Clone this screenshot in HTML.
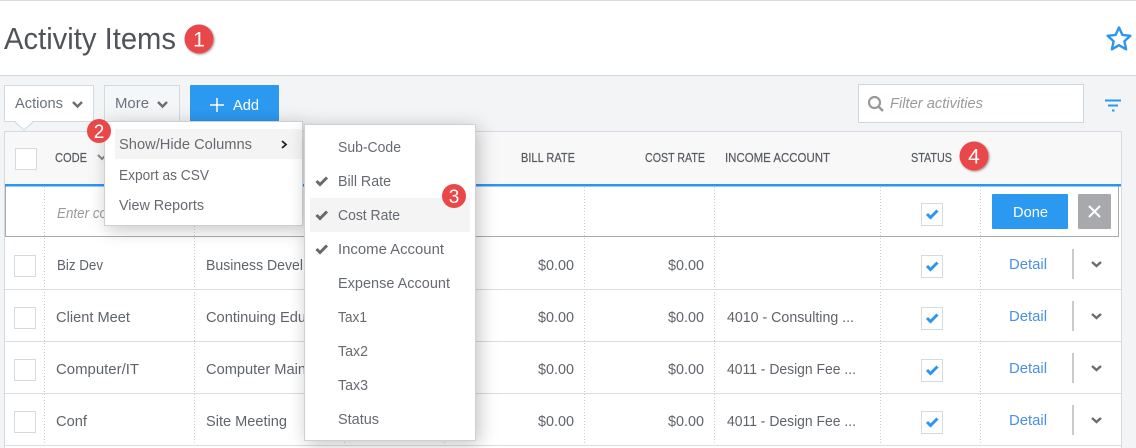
<!DOCTYPE html>
<html><head><meta charset="utf-8"><style>
html,body{margin:0;padding:0;background:#fff;width:1136px;height:448px;overflow:hidden}
svg{display:block}
text{font-family:"Liberation Sans",sans-serif;font-size:14.5px;fill:#5f646b}
.h{font-size:13px;fill:#55595f;stroke:#55595f;stroke-width:.2}
.m{font-size:14.5px;fill:#666a70}
.b{fill:none;stroke:#d5dae1;stroke-width:1}
.d{stroke:#c9ced6;stroke-width:1;stroke-dasharray:1 2}
.r{stroke:#d8dce3;stroke-width:1}
.c{fill:none;stroke:#2c96ee;stroke-width:3}
.g{fill:none;stroke:#6a6d72;stroke-width:2.4}
.n{fill:#fff;font-size:21px;text-anchor:middle}
</style></head><body>
<svg width="1136" height="448" viewBox="0 0 1136 448" xmlns="http://www.w3.org/2000/svg">
<defs>
<clipPath id="c1"><rect x="0" y="0" width="304" height="448"/></clipPath>
<filter id="s" x="-30%" y="-30%" width="160%" height="160%"><feDropShadow dx="3" dy="3" stdDeviation="9" flood-color="#000" flood-opacity=".24"/></filter>
<filter id="bs" x="-30%" y="-30%" width="160%" height="160%"><feDropShadow dx="1" dy="1" stdDeviation="1" flood-color="#000" flood-opacity=".4"/></filter>
</defs>
<rect width="1136" height="448" fill="#f2f4f6"/>
<rect width="1136" height="75" fill="#fff"/>
<rect width="1136" height="1" fill="#d5dde5"/>
<rect y="75" width="1136" height="1" fill="#d3d8dd"/>
<text x="4" y="49" style="font-size:31px;fill:#505358" textLength="172" lengthAdjust="spacingAndGlyphs">Activity Items</text>
<path d="M1119 27.5l3.400 7.400 8 .9-6 5.500 1.700 8-7.100-4.100-7.100 4.100 1.700-8-6-5.500 8-.9z" fill="none" stroke="#2c96ee" stroke-width="2.400" stroke-linejoin="round"/>

<!-- table -->
<rect x="4.500" y="131.500" width="1117" height="320" fill="#fff" stroke="#d5dae1"/>
<rect x="5" y="132" width="1116" height="52" fill="#f8f8f9"/>
<rect x="5" y="184" width="1116" height="2.500" fill="#2c96ee"/>

<!-- toolbar -->
<rect x="4.500" y="85.500" width="89" height="36" fill="#fff" stroke="#cfdae3"/>
<path d="M15 122l9 8 9-8" fill="#fff" stroke="#cfdae3"/>
<rect x="16" y="120" width="16" height="2" fill="#fff"/>
<text x="15" y="108" textLength="48" lengthAdjust="spacingAndGlyphs" style="fill:#6b727c">Actions</text>
<path class="g" d="M73 102l4.500 4.500 4.500-4.500"/>
<rect x="104.500" y="85.500" width="75" height="36" fill="#f4f6f8" stroke="#cfdae3"/>
<text x="115" y="108" textLength="34" lengthAdjust="spacingAndGlyphs" style="fill:#6b727c">More</text>
<path class="g" d="M158 102l4.500 4.500 4.500-4.500"/>
<rect x="190" y="85" width="89" height="37" rx="1" fill="#2c99f0"/>
<path d="M217 98v14M210 105h14" stroke="#fff" stroke-width="1.500" fill="none"/>
<text x="233" y="110" textLength="26" lengthAdjust="spacingAndGlyphs" style="fill:#fff">Add</text>
<rect x="858.500" y="84.500" width="225" height="38" fill="#fff" stroke="#c9d7e2"/>
<circle cx="874.500" cy="102.500" r="5.500" fill="none" stroke="#999" stroke-width="2.200"/>
<path d="M878.500 106.500l4.500 4.500" stroke="#999" stroke-width="2.600" fill="none"/>
<text x="890" y="108" textLength="93" lengthAdjust="spacingAndGlyphs" style="fill:#9a9a9a;font-style:italic">Filter activities</text>
<path d="M1105 100.500h16M1108 105.500h10M1112 110.500h2.500" stroke="#2c96ee" stroke-width="2" fill="none"/>

<!-- header -->
<rect class="b" x="15.500" y="148.500" width="21" height="21" style="fill:#fff"/>
<text class="h" x="55" y="162" textLength="32" lengthAdjust="spacingAndGlyphs">CODE</text>
<path d="M98 155l4 4 4-4" fill="none" stroke="#888" stroke-width="2"/>
<text class="h" x="521" y="162" textLength="54" lengthAdjust="spacingAndGlyphs">BILL RATE</text>
<text class="h" x="645" y="162" textLength="60" lengthAdjust="spacingAndGlyphs">COST RATE</text>
<text class="h" x="725" y="162" textLength="105" lengthAdjust="spacingAndGlyphs">INCOME ACCOUNT</text>
<text class="h" x="911" y="162" textLength="41" lengthAdjust="spacingAndGlyphs">STATUS</text>

<!-- edit row -->
<rect x="5.500" y="186" width="1113" height="50.500" fill="#fff" stroke="#aaa"/>
<rect x="5" y="184" width="1116" height="2.500" fill="#2c96ee"/>
<path class="d" d="M44.500 187v49M194.500 187v49M584.500 187v49M714.500 187v49M880.500 187v49M980.500 187v49"/>
<text x="57" y="218" textLength="50" lengthAdjust="spacingAndGlyphs" style="fill:#9a9a9a;font-style:italic">Enter co</text>
<rect class="b" x="921.500" y="203.500" width="21" height="22" style="fill:#fff"/>
<path class="c" d="M927 214l3.500 3.500 7-7"/>
<rect x="992" y="194" width="76" height="35" rx="1" fill="#2c99f0"/>
<text x="1013" y="217" textLength="35" lengthAdjust="spacingAndGlyphs" style="fill:#fff">Done</text>
<rect x="1078" y="194" width="33" height="35" rx="1" fill="#a7a9ac"/>
<path d="M1089 206l11 11M1100 206l-11 11" stroke="#fff" stroke-width="2" fill="none"/>

<!-- rows -->
<path class="d" d="M44.500 238v210M194.500 238v210M344.500 238v210M444.500 238v210M584.500 238v210M714.500 238v210M880.500 238v210M980.500 238v210"/>
<path class="r" d="M5 289.500h1116M5 341.500h1116M5 393.500h1116M5 445.500h1116"/>
<rect class="b" x="14.500" y="255.500" width="21" height="21" style="fill:#fff"/>
<rect class="b" x="14.500" y="307.500" width="21" height="21" style="fill:#fff"/>
<rect class="b" x="14.500" y="359.500" width="21" height="21" style="fill:#fff"/>
<rect class="b" x="14.500" y="411.500" width="21" height="21" style="fill:#fff"/>
<text x="57" y="270" textLength="46" lengthAdjust="spacingAndGlyphs">Biz Dev</text>
<text x="56" y="322" textLength="74" lengthAdjust="spacingAndGlyphs">Client Meet</text>
<text x="56" y="374" textLength="83" lengthAdjust="spacingAndGlyphs">Computer/IT</text>
<text x="56" y="426" textLength="31" lengthAdjust="spacingAndGlyphs">Conf</text>
<g clip-path="url(#c1)">
<text x="206" y="270" textLength="97" lengthAdjust="spacingAndGlyphs">Business Devel</text>
<text x="206" y="322" textLength="100" lengthAdjust="spacingAndGlyphs">Continuing Edu</text>
<text x="206" y="374" textLength="100" lengthAdjust="spacingAndGlyphs">Computer Main</text>
</g>
<text x="206" y="426" textLength="81" lengthAdjust="spacingAndGlyphs">Site Meeting</text>

<text x="538" y="270" textLength="36" lengthAdjust="spacingAndGlyphs">$0.00</text>
<text x="538" y="322" textLength="36" lengthAdjust="spacingAndGlyphs">$0.00</text>
<text x="538" y="374" textLength="36" lengthAdjust="spacingAndGlyphs">$0.00</text>
<text x="538" y="426" textLength="36" lengthAdjust="spacingAndGlyphs">$0.00</text>
<text x="668" y="270" textLength="36" lengthAdjust="spacingAndGlyphs">$0.00</text>
<text x="668" y="322" textLength="36" lengthAdjust="spacingAndGlyphs">$0.00</text>
<text x="668" y="374" textLength="36" lengthAdjust="spacingAndGlyphs">$0.00</text>
<text x="668" y="426" textLength="36" lengthAdjust="spacingAndGlyphs">$0.00</text>
<text x="727" y="322" textLength="127" lengthAdjust="spacingAndGlyphs">4010 - Consulting ...</text>
<text x="727" y="374" textLength="129" lengthAdjust="spacingAndGlyphs">4011 - Design Fee ...</text>
<text x="727" y="426" textLength="129" lengthAdjust="spacingAndGlyphs">4011 - Design Fee ...</text>

<rect class="b" x="921.500" y="255.500" width="21" height="22" style="fill:#fff"/><path class="c" d="M927 266l3.500 3.500 7-7"/>
<rect class="b" x="921.500" y="307.500" width="21" height="22" style="fill:#fff"/><path class="c" d="M927 318l3.500 3.500 7-7"/>
<rect class="b" x="921.500" y="359.500" width="21" height="22" style="fill:#fff"/><path class="c" d="M927 370l3.500 3.500 7-7"/>
<rect class="b" x="921.500" y="411.500" width="21" height="22" style="fill:#fff"/><path class="c" d="M927 422l3.500 3.500 7-7"/>

<text x="1009" y="269" textLength="38" lengthAdjust="spacingAndGlyphs" style="fill:#4a90e8">Detail</text>
<text x="1009" y="321" textLength="38" lengthAdjust="spacingAndGlyphs" style="fill:#4a90e8">Detail</text>
<text x="1009" y="373" textLength="38" lengthAdjust="spacingAndGlyphs" style="fill:#4a90e8">Detail</text>
<text x="1009" y="425" textLength="38" lengthAdjust="spacingAndGlyphs" style="fill:#4a90e8">Detail</text>
<path d="M1073 249v30M1073 301v30M1073 353v30M1073 405v30" stroke="#cbcbcb" stroke-width="2" fill="none"/>
<path class="g" d="M1092 262l4.500 4 4.500-4M1092 314l4.500 4 4.500-4M1092 366l4.500 4 4.500-4M1092 418l4.500 4 4.500-4"/>

<!-- menu 1 -->
<rect x="104.500" y="121.500" width="198" height="104" fill="#fff" stroke="#d0d0d0" filter="url(#s)"/>
<rect x="115" y="129" width="187" height="30" fill="#f4f4f4"/>
<text class="m" x="119" y="149" textLength="133" lengthAdjust="spacingAndGlyphs">Show/Hide Columns</text>
<path d="M282 141l4 3.500-4 3.500" fill="none" stroke="#222" stroke-width="1.800"/>
<text class="m" x="119" y="180" textLength="90" lengthAdjust="spacingAndGlyphs">Export as CSV</text>
<text class="m" x="119" y="210" textLength="85" lengthAdjust="spacingAndGlyphs">View Reports</text>

<!-- menu 2 -->
<rect x="304.500" y="124.500" width="171" height="316" fill="#fff" stroke="#d0d0d0" filter="url(#s)"/>
<rect x="310" y="198" width="160" height="34" fill="#f4f4f4"/>
<text class="m" x="338" y="152" textLength="63" lengthAdjust="spacingAndGlyphs">Sub-Code</text>
<text class="m" x="338" y="186" textLength="53" lengthAdjust="spacingAndGlyphs">Bill Rate</text>
<text class="m" x="338" y="220" textLength="62" lengthAdjust="spacingAndGlyphs">Cost Rate</text>
<text class="m" x="338" y="254" textLength="106" lengthAdjust="spacingAndGlyphs">Income Account</text>
<text class="m" x="338" y="288" textLength="112" lengthAdjust="spacingAndGlyphs">Expense Account</text>
<text class="m" x="338" y="322" textLength="29" lengthAdjust="spacingAndGlyphs">Tax1</text>
<text class="m" x="338" y="356" textLength="30" lengthAdjust="spacingAndGlyphs">Tax2</text>
<text class="m" x="338" y="390" textLength="30" lengthAdjust="spacingAndGlyphs">Tax3</text>
<text class="m" x="338" y="424" textLength="41" lengthAdjust="spacingAndGlyphs">Status</text>
<path d="M316.500 181l3.500 3.500 7-7M316.500 215l3.500 3.500 7-7M316.500 249l3.500 3.500 7-7" fill="none" stroke="#66696e" stroke-width="3"/>

<!-- badges -->
<circle cx="199" cy="39" r="14.500" fill="#e94748" filter="url(#bs)"/>
<text class="n" x="199" y="46.500">1</text>
<circle cx="99" cy="131" r="12" fill="#e94748"/>
<text class="n" x="99" y="138" style="font-size:19px">2</text>
<circle cx="454" cy="196" r="12" fill="#e94748"/>
<text class="n" x="454" y="203" style="font-size:19px">3</text>
<circle cx="974" cy="156" r="14.500" fill="#e94748" filter="url(#bs)"/>
<text class="n" x="974" y="163.500">4</text>
</svg>
</body></html>
